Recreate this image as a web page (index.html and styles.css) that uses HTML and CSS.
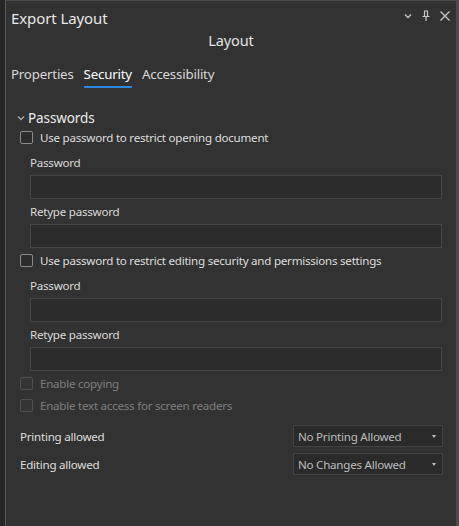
FILE: index.html
```html
<!DOCTYPE html>
<html>
<head>
<meta charset="utf-8">
<link rel="stylesheet" href="styles.css">
</head>
<body>
<div class="frame">
  <div class="gutter"></div>
  <div class="panel">
    <div class="titlebar">
      <span class="title">Export Layout</span>
      <div class="win-icons">
        <svg class="ico" width="10" height="10" viewBox="0 0 10 10"><path d="M2 3.5 L5 6.5 L8 3.5" fill="none" stroke="#c8c8c8" stroke-width="1.3"/></svg>
        <svg class="ico" width="10" height="12" viewBox="0 0 10 12"><path d="M3 1 H7 M3.5 1 V6 M6.5 1 V6 M1.5 6.5 H8.5 M5 6.5 V11" fill="none" stroke="#c8c8c8" stroke-width="1.2"/></svg>
        <svg class="ico" width="12" height="12" viewBox="0 0 12 12"><path d="M1.5 1.5 L10.5 10.5 M10.5 1.5 L1.5 10.5" fill="none" stroke="#c8c8c8" stroke-width="1.3"/></svg>
      </div>
    </div>
    <div class="doc-title">Layout</div>
    <div class="tabs">
      <span class="tab">Properties</span>
      <span class="tab active">Security</span>
      <span class="tab">Accessibility</span>
    </div>
    <div class="content">
      <div class="section-head">
        <svg class="chev" width="8" height="6" viewBox="0 0 8 6"><path d="M1 1.5 L4 4.5 L7 1.5" fill="none" stroke="#a8a8a8" stroke-width="1.4"/></svg>
        <span>Passwords</span>
      </div>
      <label class="check"><span class="box"></span><span>Use password to restrict opening document</span></label>
      <div class="field">
        <div class="field-label">Password</div>
        <div class="input"></div>
        <div class="field-label">Retype password</div>
        <div class="input"></div>
      </div>
      <label class="check"><span class="box"></span><span>Use password to restrict editing security and permissions settings</span></label>
      <div class="field">
        <div class="field-label">Password</div>
        <div class="input"></div>
        <div class="field-label">Retype password</div>
        <div class="input"></div>
      </div>
      <label class="check disabled"><span class="box"></span><span>Enable copying</span></label>
      <label class="check disabled"><span class="box"></span><span>Enable text access for screen readers</span></label>
      <div class="opt-row print">
        <span>Printing allowed</span>
        <div class="select"><span>No Printing Allowed</span><span class="tri"></span></div>
      </div>
      <div class="opt-row">
        <span>Editing allowed</span>
        <div class="select"><span>No Changes Allowed</span><span class="tri"></span></div>
      </div>
    </div>
  </div>
</div>
</body>
</html>
```
FILE: styles.css
```css
html, body {
  margin: 0;
  padding: 0;
  background: #282828;
}
body {
  font-family: "Noto Sans", "Open Sans", sans-serif;
  color: #dedede;
  font-size: 11.6px;
  letter-spacing: -0.25px;
}
.frame {
  display: flex;
  width: 459px;
  height: 526px;
  overflow: hidden;
}
.gutter {
  width: 5px;
  background: #262626;
  flex: none;
}
.panel {
  flex: 1;
  background: #323232;
  border-left: 1px solid #5a5a5a;
  border-top: 1px solid #4a4a4a;
  border-right: 3px solid #4b4b4b;
  display: flex;
  flex-direction: column;
}
.titlebar {
  height: 32px;
  padding: 1px 5px 0 5px;
  display: flex;
  align-items: center;
  justify-content: space-between;
}
.title {
  font-size: 15px;
  color: #e8e8e8;
  letter-spacing: -0.1px;
}
.win-icons {
  display: flex;
  align-items: center;
  gap: 8px;
  margin-top: -4px;
}
.ico { display: block; }
.doc-title {
  text-align: center;
  font-size: 14.5px;
  line-height: 20px;
  color: #e4e4e4;
  margin-top: -4px;
  letter-spacing: -0.1px;
}
.tabs {
  display: flex;
  gap: 10px;
  padding-left: 5px;
  margin-top: 14px;
}
.tab {
  font-size: 13.3px;
  line-height: 20px;
  padding-bottom: 2px;
  color: #d8d8d8;
  border-bottom: 2px solid transparent;
  letter-spacing: -0.2px;
}
.tab.active {
  color: #ffffff;
  border-bottom-color: #2d8ae2;
  border-radius: 1px;
}
.content {
  padding: 0 13px 0 14px;
  display: flex;
  flex-direction: column;
}
.section-head {
  margin-top: 21px;
  display: flex;
  align-items: center;
  gap: 3px;
  font-size: 13.5px;
  line-height: 18px;
  color: #ececec;
  margin-left: -3px;
  letter-spacing: -0.1px;
}
.chev { display: block; margin-top: -1px; }
.check {
  display: flex;
  align-items: center;
  gap: 7px;
  height: 22px;
  margin-top: -1px;
  margin-bottom: 1px;
}
.field + .check {
  margin-top: 1px;
}
.box {
  width: 11px;
  height: 11px;
  border: 1px solid #8a8a8a;
  border-radius: 2px;
  background: #2c2c2c;
  flex: none;
}
.check.disabled { color: #7e7e7e; }
.check.disabled .box { border-color: #505050; background: #343434; }
.field {
  padding-left: 10px;
  display: flex;
  flex-direction: column;
}
.field-label {
  line-height: 18px;
  margin-top: 4px;
  color: #dadada;
}
.field-label:first-child {
  margin-top: 5px;
}
.input {
  height: 22px;
  margin-top: 3px;
  border: 1px solid #464646;
  background: #2c2c2c;
  margin-right: 1px;
}
.opt-row {
  display: flex;
  align-items: center;
  justify-content: space-between;
  height: 22px;
  margin-top: 6px;
}
.opt-row.print { margin-top: 8px; }
.select {
  height: 20px;
  border: 1px solid #424242;
  background: #2a2a2a;
  display: flex;
  align-items: center;
  justify-content: space-between;
  padding: 0 6px 0 4px;
  box-sizing: content-box;
  color: #bcbcbc;
  width: 138px;
}
.tri {
  width: 0;
  height: 0;
  border-left: 2.5px solid transparent;
  border-right: 2.5px solid transparent;
  border-top: 3px solid #c0c0c0;
}
```
